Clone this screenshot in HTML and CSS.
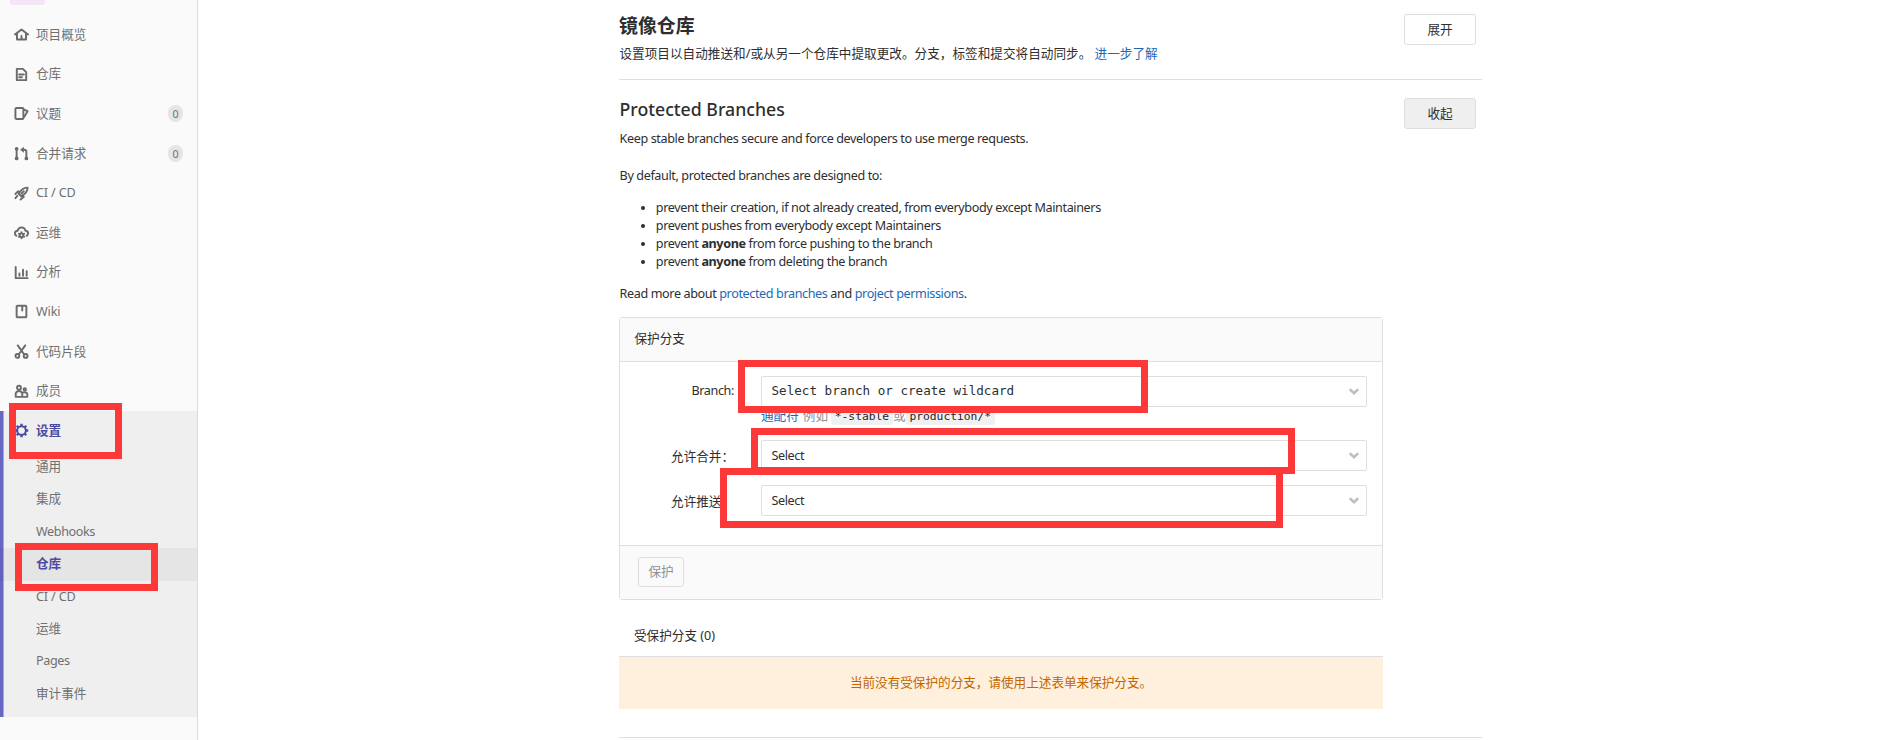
FILE: index.html
```html
<!DOCTYPE html>
<html lang="zh-CN">
<head>
<meta charset="utf-8">
<title>仓库设置</title>
<link rel="stylesheet" href="styles.css">
</head>
<body>
<div class="page">
<aside class="sidebar">
  <div class="avatar"></div>
  <nav class="nav">
    <a class="item"><svg class="icon" viewBox="0 0 16 16"><path d="M1 8 8 2.600 15 8M3.200 7v6.400h9.600V7M8 13V9.500"/></svg><span>项目概览</span></a>
    <a class="item"><svg class="icon" viewBox="0 0 16 16"><path d="M3 2h6.500L13 5.500V14H3zM5.500 8h5M5.500 11h3"/></svg><span>仓库</span></a>
    <a class="item"><svg class="icon" viewBox="0 0 16 16"><rect x="1.500" y="2.200" width="8.500" height="11.600" rx="1"/><path d="M11 4l3.500 1.500L11 11.500"/></svg><span>议题</span><b class="badge">0</b></a>
    <a class="item"><svg class="icon" viewBox="0 0 16 16"><path d="M2.800 3v10M9 4h2q2.200 0 2.200 2v7"/><path class="dot" d="M10.500 .8v6.400L6.500 4z"/><circle class="dot" cx="2.800" cy="3" r="2"/><circle class="dot" cx="2.800" cy="13.200" r="2"/><circle class="dot" cx="13.200" cy="13.200" r="2"/></svg><span>合并请求</span><b class="badge">0</b></a>
    <a class="item"><svg class="icon" viewBox="0 0 16 16"><path d="M14.500 1.700Q8.500 1.500 5 8.300L7.700 11Q14.500 7.500 14.500 1.700zM8 8l2.500-2.500M4.500 5.500 1.500 8.500M3.500 10.500 1.500 13M10.500 11.500 7 14.500"/></svg><span class="tight">CI / CD</span></a>
    <a class="item"><svg class="icon" viewBox="0 0 16 16"><path d="M2.500 11.500Q1 10.500 1 8.700 1.200 6.500 3.700 6.200 5 2.500 8 2.500q3.500 0 4.300 3.700Q15 6.500 15 8.900 15 10.800 13.500 11.500"/><circle cx="8" cy="10.900" r="2"/><path d="M8 7.600v1M8 13.200v1M5.200 9.300l.9.500M9.900 12l.9.500M5.200 12.500l.9-.5M9.900 9.800l.9-.5"/></svg><span>运维</span></a>
    <a class="item"><svg class="icon" viewBox="0 0 16 16"><path d="M1.800 2v12h12.700M5.800 9v2.500M9.600 5v6.500M13.500 6.500v5"/></svg><span>分析</span></a>
    <a class="item"><svg class="icon" viewBox="0 0 16 16"><rect x="2.800" y="1.800" width="10.400" height="12.400" rx="1"/><path d="M8.800 2v5"/></svg><span class="tight">Wiki</span></a>
    <a class="item"><svg class="icon" viewBox="0 0 16 16"><path d="M4 1.500 10.800 11M12 1.500 5.200 11"/><circle cx="3.600" cy="12.700" r="2"/><circle cx="12.400" cy="12.700" r="2"/></svg><span>代码片段</span></a>
    <a class="item"><svg class="icon" viewBox="0 0 16 16"><circle cx="5.300" cy="4" r="2.100"/><circle cx="11.500" cy="5.700" r="1.300"/><path d="M1.800 13.700V10q1-2.500 3.500-2.500T8.800 10v3.700zM9.800 9q3.500-1 4.400 1.500v3.200H8.800"/></svg><span>成员</span></a>
  </nav>
  <nav class="nav settings">
    <a class="item current"><svg class="icon" viewBox="0 0 16 16"><circle cx="8" cy="8" r="4.600"/><path class="teeth" d="M8 .8v2.700M8 12.500v2.700M.8 8h2.700M12.500 8h2.700M2.900 2.900l1.900 1.900M11.200 11.200l1.900 1.900M2.900 13.100l1.900-1.900M11.200 4.800l1.900-1.900"/></svg><span>设置</span></a>
    <a class="sub">通用</a>
    <a class="sub">集成</a>
    <a class="sub latin">Webhooks</a>
    <a class="sub active">仓库</a>
    <a class="sub tight">CI / CD</a>
    <a class="sub">运维</a>
    <a class="sub latin">Pages</a>
    <a class="sub">审计事件</a>
  </nav>
</aside>
<main class="content">
  <section class="section mirror">
    <div class="head">
      <h4 class="title-cn">镜像仓库</h4>
      <button class="btn">展开</button>
    </div>
    <p class="desc">设置项目以自动推送和/或从另一个仓库中提取更改。分支，标签和提交将自动同步。 <a class="link">进一步了解</a></p>
  </section>
  <section class="section protected">
    <div class="head">
      <h4 class="title-en">Protected Branches</h4>
      <button class="btn pressed">收起</button>
    </div>
    <p class="latin keep">Keep stable branches secure and force developers to use merge requests.</p>
    <p class="latin design">By default, protected branches are designed to:</p>
    <ul class="latin rules">
      <li>prevent their creation, if not already created, from everybody except Maintainers</li>
      <li>prevent pushes from everybody except Maintainers</li>
      <li>prevent <strong>anyone</strong> from force pushing to the branch</li>
      <li>prevent <strong>anyone</strong> from deleting the branch</li>
    </ul>
    <p class="latin more">Read more about <a class="link">protected branches</a> and <a class="link">project permissions</a>.</p>
    <div class="card">
      <div class="card-head">保护分支</div>
      <div class="card-body">
        <div class="row first">
          <label class="label latin">Branch:</label>
          <div class="field"><div class="select mono"><span class="value">Select branch or create wildcard</span><svg class="chev" viewBox="0 0 10 7"><path d="M.8 1.200 5 5.200 9.200 1.200"/></svg></div>
            <div class="help"><a class="link">通配符</a><span>例如</span><code class="stable">*-stable</code><span class="or">或</span><code>production/*</code></div></div>
        </div>
        <div class="row second">
          <label class="label">允许合并<span class="colon">：</span></label>
          <div class="field"><div class="select latin">Select<svg class="chev" viewBox="0 0 10 7"><path d="M.8 1.200 5 5.200 9.200 1.200"/></svg></div></div>
        </div>
        <div class="row">
          <label class="label">允许推送<span class="colon">：</span></label>
          <div class="field"><div class="select latin">Select<svg class="chev" viewBox="0 0 10 7"><path d="M.8 1.200 5 5.200 9.200 1.200"/></svg></div></div>
        </div>
      </div>
      <div class="card-foot"><button class="btn save">保护</button></div>
    </div>
    <div class="list-title">受保护分支 (0)</div>
    <div class="notice">当前没有受保护的分支，请使用上述表单来保护分支。</div>
  </section>
</main>
</div>
<div class="mark mark-settings"></div>
<div class="mark mark-repo"></div>
<div class="mark mark-branch"></div>
<div class="mark mark-merge"></div>
<div class="mark mark-push"></div>
</body>
</html>
```
FILE: styles.css
```css
* { box-sizing: border-box; }
body { margin: 0; height: 740px; overflow: hidden; background: #fff; color: #2e2e2e; font: 12.6px/18px "Noto Sans", "Noto Sans CJK SC", sans-serif; }
h4, p, ul { margin: 0; }
.page { display: flex; height: 740px; }
.sidebar { flex: none; width: 198px; background: #fafafa; border-right: 1px solid #dedede; color: #707070; }
.avatar { width: 35px; height: 5px; margin-left: 9.5px; background: #f3e5f5; border-radius: 0 0 3px 3px; }
.nav { display: flex; flex-direction: column; padding-top: 10px; }
.item { display: flex; align-items: center; height: 39.6px; padding: 0 14px 0 14px; }
.icon { width: 15px; height: 15px; margin-right: 7px; fill: none; stroke: #6b6b6b; stroke-width: 2.05; stroke-linecap: round; stroke-linejoin: round; }
.icon .dot { fill: #6b6b6b; stroke: none; }
.badge { margin-left: auto; width: 15px; height: 17px; border-radius: 8px; background: #e5e5e5; font-weight: 400; font-size: 10.8px; line-height: 17px; text-align: center; }
.settings { width: 198px; height: 306px; padding-top: 0; background: #efefef; border-right: 1px solid #dcdcdc; box-shadow: inset 3px 0 #6666c4, inset 4px 0 #a8a8db; }
.current { color: #4b4ba3; font-weight: 600; height: 40px; }
.current .icon { stroke: #4b4ba3; }
.teeth { stroke-linecap: butt; stroke-width: 2.5; }
.sub { height: 32.4px; padding-left: 36px; line-height: 31px; }
.active { color: #4b4ba3; font-weight: 600; background: rgba(0,0,0,.04); }
.content { width: 863px; margin-left: 421px; }
.section { border-bottom: 1px solid #dedede; }
.head { display: flex; justify-content: space-between; padding-right: 6px; }
.btn { display: block; width: 72px; height: 31px; padding: 0; border: 1px solid #dedede; border-radius: 3px; background: #fff; color: #2e2e2e; font: inherit; }
.pressed { background: #efefef; }
.mirror { height: 80px; padding-top: 14px; }
.title-cn { padding-top: 1px; font-size: 18.9px; line-height: 22px; font-weight: 700; }
.desc { line-height: 18px; letter-spacing: .03px; text-indent: .5px; }
.link { color: #1b69b6; }
.protected { height: 658px; padding-top: 18px; }
.title-en { font-size: 17.7px; line-height: 22px; font-weight: 500; text-indent: .5px; }
.latin { letter-spacing: -.385px; }
.tight { letter-spacing: -.15px; }
.keep, .design, .more { text-indent: .6px; }
.keep { margin-top: 1px; }
.design { margin-top: 19px; }
.rules { margin-top: 14px; padding-left: 36.8px; }
.more { margin-top: 14px; }
.card { width: 764px; height: 283px; margin-top: 14px; border: 1px solid #dedede; border-radius: 3px; display: flex; flex-direction: column; }
.card-head { height: 44px; padding: 0 14.5px; line-height: 42px; background: #fafafa; border-bottom: 1px solid #dedede; }
.card-body { flex: 1; padding: 14px 15px 0 0; }
.row { display: flex; height: 45px; }
.first { height: 64px; }
.label { width: 114px; line-height: 31px; text-align: right; margin-right: 27px; }
.first .label { line-height: 29px; }
.colon { font-family: "Noto Sans CJK TC", sans-serif; }
.field { flex: 1; }
.select { display: flex; align-items: center; justify-content: space-between; height: 31px; padding: 0 7px 0 9.5px; border: 1px solid #dedede; border-radius: 2px; }
.mono { font-family: "DejaVu Sans Mono", monospace; }
.value { padding-bottom: 2px; }
.chev { width: 10px; height: 7px; fill: none; stroke: #bfbfbf; stroke-width: 2.6; }
.help { display: flex; align-items: center; color: #919191; line-height: 18px; }
.help span { margin-left: 4px; }
.help .or { margin-left: 0; }
.help code { padding: 1px 3.8px; border-radius: 3px; background: #f0f0f0; color: #1f1f1f; font: 11.3px/15px "DejaVu Sans Mono", monospace; }
.help .stable { margin-left: 3px; }
.card-foot { height: 54px; padding: 11px 18px; background: #fafafa; border-top: 1px solid #dedede; }
.save { width: 46px; height: 30px; background: #fafafa; color: #919191; }
.list-title { width: 764px; height: 57px; padding: 27px 15px 0; border-bottom: 1px solid #dedede; }
.notice { width: 764px; height: 52px; background: #fff0de; color: #c26700; line-height: 52px; text-align: center; }
.mark { position: absolute; border: 7px solid #fc3838; }
.mark-settings { left: 9px; top: 403px; width: 113px; height: 56px; }
.mark-repo { left: 15px; top: 543px; width: 143px; height: 48px; }
.mark-branch { left: 738px; top: 360px; width: 410px; height: 53px; }
.mark-merge { left: 751px; top: 428px; width: 544px; height: 46px; }
.mark-push { left: 720px; top: 468px; width: 563px; height: 60px; }
```
